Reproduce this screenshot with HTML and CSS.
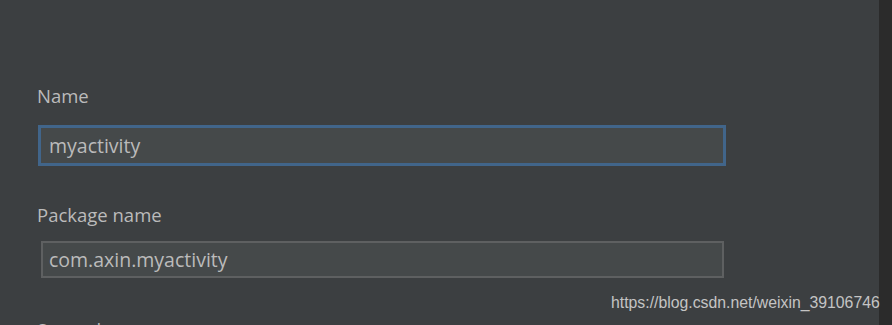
FILE: index.html
```html
<!DOCTYPE html>
<html lang="en">
<head>
    <meta charset="UTF-8">
    <title>New Activity</title>
    <link rel="stylesheet" href="styles.css">
</head>
<body>
<div class="page">
    <div class="panel">
        <div class="field">
            <div class="lbl">Name</div>
            <div class="ipt focus">myactivity</div>
        </div>
        <div class="field">
            <div class="lbl">Package name</div>
            <div class="ipt">com.axin.myactivity</div>
        </div>
        <div class="field last">
            <div class="lbl">Superclass</div>
        </div>
    </div>
    <div class="strip"></div>
    <div class="mark">https://blog.csdn.net/weixin_39106746</div>
</div>
</body>
</html>
```

FILE: styles.css
```css
html, body {
    margin: 0;
    padding: 0;
    height: 100%;
    overflow: hidden;
}

.page {
    position: relative;
    display: flex;
    height: 325px;
    overflow: hidden;
    background-color: #3c3f41;
    font-family: "Open Sans", "Noto Sans", sans-serif;
}

.panel {
    flex: 1;
    padding: 82px 0 0 37px;
}

.strip {
    width: 13px;
    background-color: #2b2b2b;
}

.field {
    margin-bottom: 35px;
}

.last {
    margin-top: 38px;
}

.lbl {
    color: #bbbbbb;
    font-size: 18.5px;
    line-height: 28px;
    margin-bottom: 12px;
}

.ipt {
    box-sizing: border-box;
    width: 683px;
    height: 37px;
    margin-left: 4px;
    padding-left: 6px;
    border: 2px solid #5e6061;
    background-color: #45494a;
    color: #bbbbbb;
    font-size: 19.5px;
    line-height: 33px;
}

.focus {
    width: 688px;
    height: 41px;
    margin-top: 15px;
    margin-left: 1px;
    padding-left: 8px;
    border: 3px solid #41658a;
    line-height: 35px;
}

.mark {
    position: absolute;
    left: 611px;
    top: 294px;
    color: #c4c4c4;
    font-family: "Liberation Sans", Arial, sans-serif;
    font-size: 15.8px;
}
```
